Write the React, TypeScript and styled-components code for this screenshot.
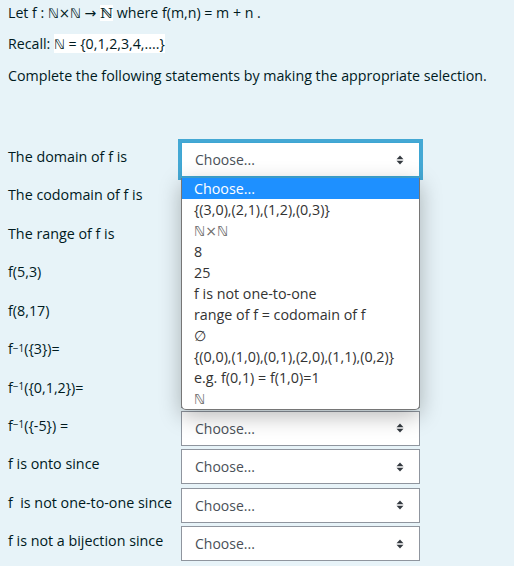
import React from "react";
import styled, { createGlobalStyle } from "styled-components";

const Global = createGlobalStyle`
  html, body { margin: 0; padding: 0; }
  body {
    background: #e7f3f8;
    font-family: "Open Sans", "Noto Sans", "DejaVu Sans", sans-serif;
    color: #001a1e;
    width: 514px;
    height: 566px;
    overflow: hidden;
  }
`;

const Page = styled.div`
  padding: 3px 0 0 8px;
  background: #e7f3f8;
  min-height: 563px;
`;

const Intro = styled.p`
  margin: 0 0 11px 0;
  font-size: 14.2px;
  line-height: 20px;
`;

const Instruction = styled.p`
  margin: 0;
  font-size: 14.25px;
  line-height: 22px;
`;

const Hl = styled.span<{ $serif?: boolean }>`
  background: #ffffff;
  font-family: ${(p) => (p.$serif ? `"DejaVu Serif", serif` : "inherit")};
`;

const Bb = styled.span`
  font-family: "DejaVu Sans", sans-serif;
  font-size: 0.95em;
`;

const Grid = styled.div`
  margin-top: 55px;
  display: grid;
  grid-template-columns: 173px 239px;
  grid-auto-rows: 35px;
  row-gap: 3.43px;
`;

const Label = styled.div`
  display: flex;
  align-items: center;
  padding-bottom: 6px;
  font-size: 14.3px;
  white-space: pre;
`;

const Sup = styled.sup`
  font-size: 10px;
  position: relative;
  top: -1px;
  vertical-align: super;
  line-height: 0;
`;

const SelectWrap = styled.div`
  position: relative;
`;

const SelectBox = styled.div<{ $focused?: boolean }>`
  box-sizing: border-box;
  height: 35px;
  width: 239px;
  display: flex;
  align-items: center;
  justify-content: space-between;
  padding: 0 13px 0 13px;
  background: #ffffff;
  border: 1px solid ${(p) => (p.$focused ? "#3ea6d3" : "#8f959e")};
  box-shadow: ${(p) => (p.$focused ? "0 0 0 3px #44a8d4" : "none")};
  font-size: 14px;
  color: #495057;
`;

const Arrow = styled.svg`
  width: 8px;
  height: 10px;
  flex: none;
  margin-right: 2px;
`;

const List = styled.div`
  position: absolute;
  z-index: 5;
  left: 0;
  top: calc(100% + 1px);
  width: 239px;
  box-sizing: border-box;
  background: #ffffff;
  border: 1px solid #767676;
  border-top: none;
  border-radius: 0 0 5px 5px;
  box-shadow: 0 6px 22px rgba(0, 0, 0, 0.28);
  overflow: hidden;
`;

const Option = styled.div<{ $active?: boolean }>`
  height: 21px;
  line-height: 21px;
  padding-left: 12px;
  font-size: 14.3px;
  white-space: nowrap;
  color: ${(p) => (p.$active ? "#ffffff" : "#333333")};
  background: ${(p) => (p.$active ? "#1e90ff" : "transparent")};
`;

const BbOpt = styled.span`
  font-family: "DejaVu Sans", sans-serif;
  color: #6b6b6b;
  font-size: 14px;
`;

const ArrowIcon = () => (
  <Arrow viewBox="0 0 8 10">
    <path d="M0.5 4.2 L4 0.5 L7.5 4.2 Z" fill="#343a40" />
    <path d="M0.5 5.8 L4 9.5 L7.5 5.8 Z" fill="#343a40" />
  </Arrow>
);

const options: React.ReactNode[] = [
  "Choose...",
  "{(3,0),(2,1),(1,2),(0,3)}",
  <BbOpt key="nn">ℕ×ℕ</BbOpt>,
  "8",
  "25",
  "f is not one-to-one",
  "range of f = codomain of f",
  "∅",
  "{(0,0),(1,0),(0,1),(2,0),(1,1),(0,2)}",
  "e.g. f(0,1) = f(1,0)=1",
  <BbOpt key="n">ℕ</BbOpt>,
];

const inv = (rest: string) => (
  <>
    f<Sup>−1</Sup>
    {rest}
  </>
);

const rows: React.ReactNode[] = [
  "The domain of f is",
  "The codomain of f is",
  "The range of f is",
  "f(5,3)",
  "f(8,17)",
  inv("({3})="),
  inv("({0,1,2})="),
  inv("({-5}) ="),
  "f is onto since",
  "f  is not one-to-one since",
  "f is not a bijection since",
];

export default function App() {
  return (
    <>
      <Global />
      <Page>
        <Intro>
          Let f : <Bb>ℕ×ℕ</Bb> → <Hl $serif>ℕ</Hl> where f(m,n) = m + n .
        </Intro>
        <Intro>
          Recall: <Hl><Bb>ℕ</Bb> = {"{0,1,2,3,4,....}"}</Hl>
        </Intro>
        <Instruction>
          Complete the following statements by making the appropriate selection.
        </Instruction>
        <Grid>
          {rows.map((label, i) => (
            <React.Fragment key={i}>
              <Label>{label}</Label>
              <SelectWrap>
                <SelectBox $focused={i === 0}>
                  <span>Choose...</span>
                  <ArrowIcon />
                </SelectBox>
                {i === 0 && (
                  <List>
                    {options.map((o, j) => (
                      <Option key={j} $active={j === 0}>
                        {o}
                      </Option>
                    ))}
                  </List>
                )}
              </SelectWrap>
            </React.Fragment>
          ))}
        </Grid>
      </Page>
    </>
  );
}
